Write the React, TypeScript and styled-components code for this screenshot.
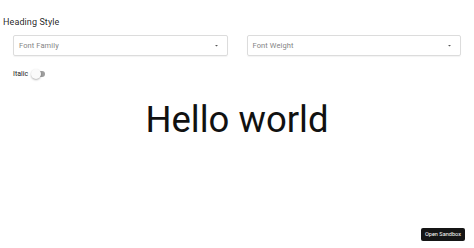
import React from "react";
import styled, { createGlobalStyle } from "styled-components";

const Global = createGlobalStyle`
  html, body { margin: 0; padding: 0; background: #fff; }
  body { font-family: Roboto, "Liberation Sans", sans-serif; color: rgba(0,0,0,0.87); }
`;

const Page = styled.div`
  position: relative;
  width: 474px;
  height: 248px;
  box-sizing: border-box;
  padding: 16px 0 0 0;
  display: flex;
  flex-direction: column;
`;

const Heading = styled.h6`
  margin: 0 0 0 3px;
  font-size: 9px;
  font-weight: 400;
  line-height: 13px;
  letter-spacing: 0.1px;
`;

const Row = styled.div`
  display: grid;
  grid-template-columns: 1fr 1fr;
  column-gap: 19px;
  padding: 0 13px;
  margin-top: 6px;
`;

const Select = styled.div`
  height: 21px;
  box-sizing: border-box;
  border: 1px solid #dcdcdc;
  border-radius: 2px;
  box-shadow: 0 1px 1px rgba(0,0,0,0.05);
  display: flex;
  align-items: center;
  justify-content: space-between;
  padding: 0 7px 0 5px;
`;

const Placeholder = styled.span`
  font-size: 7.5px;
  color: #858585;
  letter-spacing: 0.1px;
`;

const Arrow = styled.svg`
  width: 7px;
  height: 7px;
  fill: #555;
`;

const SwitchRow = styled.div`
  display: flex;
  align-items: center;
  gap: 4px;
  padding: 0 13px;
  margin-top: 13px;
  height: 10px;
`;

const Label = styled.span`
  font-size: 7px;
  color: #222;
`;

const Track = styled.span`
  position: relative;
  display: inline-block;
  width: 13px;
  height: 6px;
  border-radius: 3px;
  background: #9e9e9e;
`;

const Thumb = styled.span`
  position: absolute;
  left: -1px;
  top: -2px;
  width: 10px;
  height: 10px;
  border-radius: 50%;
  background: #fafafa;
  box-shadow: 0 1px 2px rgba(0,0,0,0.3);
`;

const Hello = styled.div`
  text-align: center;
  font-size: 36.5px;
  font-weight: 400;
  line-height: 44px;
  margin-top: 19px;
  color: #111;
`;

const Sandbox = styled.button`
  position: absolute;
  right: 9px;
  bottom: 7px;
  height: 13px;
  padding: 0 4px;
  border: none;
  border-radius: 2px;
  background: #151515;
  color: #fff;
  font-family: Roboto, "Liberation Sans", sans-serif;
  font-size: 5.6px;
  line-height: 13px;
`;

const DropdownArrow = () => (
  <Arrow viewBox="0 0 24 24">
    <path d="M7 10l5 5 5-5z" />
  </Arrow>
);

export default function App() {
  return (
    <>
      <Global />
      <Page>
        <Heading>Heading Style</Heading>
        <Row>
          <Select>
            <Placeholder>Font Family</Placeholder>
            <DropdownArrow />
          </Select>
          <Select>
            <Placeholder>Font Weight</Placeholder>
            <DropdownArrow />
          </Select>
        </Row>
        <SwitchRow>
          <Label>Italic</Label>
          <Track>
            <Thumb />
          </Track>
        </SwitchRow>
        <Hello>Hello world</Hello>
        <Sandbox>Open Sandbox</Sandbox>
      </Page>
    </>
  );
}
